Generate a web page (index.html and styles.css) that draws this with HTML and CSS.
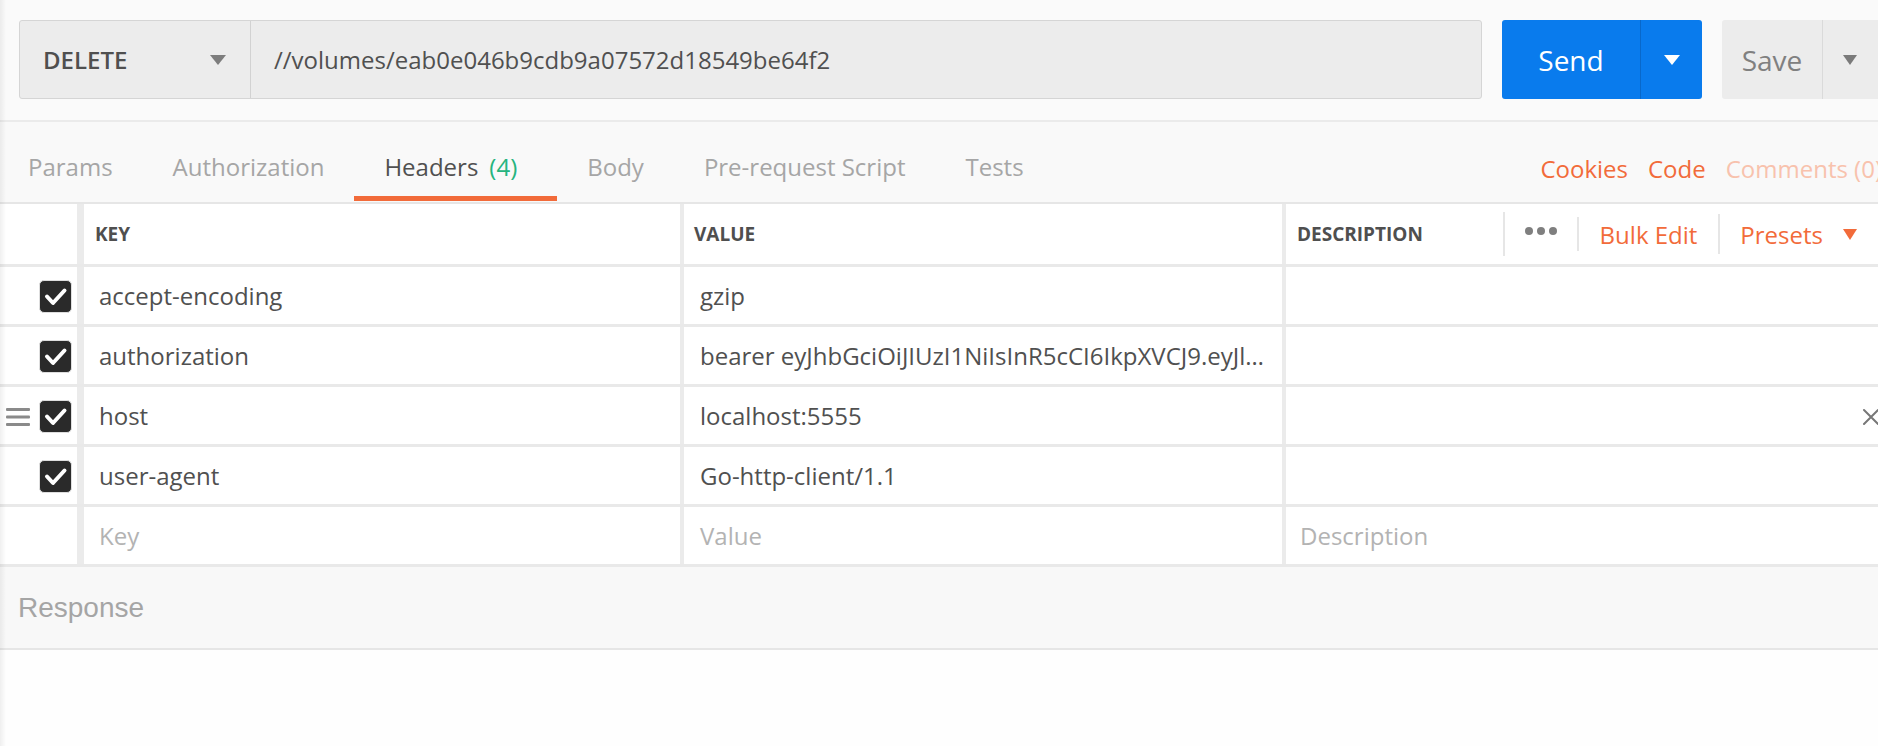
FILE: index.html
```html
<!DOCTYPE html>
<html lang="en">
<head>
<meta charset="utf-8">
<title>DELETE //volumes</title>
<link rel="stylesheet" href="styles.css">
</head>
<body>
<div class="app">
  <header class="request-bar">
    <div class="url-group">
      <div class="method">DELETE<span class="caret caret-gray"></span></div>
      <div class="url">//volumes/eab0e046b9cdb9a07572d18549be64f2</div>
    </div>
    <div class="split-btn send">
      <span class="btn-main">Send</span>
      <span class="btn-caret"><span class="caret caret-white"></span></span>
    </div>
    <div class="split-btn save">
      <span class="btn-main">Save</span>
      <span class="btn-caret"><span class="caret caret-dark"></span></span>
    </div>
  </header>

  <nav class="tabbar">
    <ul class="tabs">
      <li class="tab">Params</li>
      <li class="tab">Authorization</li>
      <li class="tab active">Headers<span class="count">(4)</span></li>
      <li class="tab">Body</li>
      <li class="tab">Pre-request Script</li>
      <li class="tab">Tests</li>
    </ul>
    <div class="tab-links">
      <span class="link">Cookies</span>
      <span class="link">Code</span>
      <span class="link faded">Comments (0)</span>
    </div>
  </nav>

  <section class="kv-table">
    <div class="kv-row kv-head">
      <div class="cell cell-check"></div>
      <div class="cell cell-key">KEY</div>
      <div class="cell cell-value">VALUE</div>
      <div class="cell cell-desc">
        <span>DESCRIPTION</span>
        <div class="head-actions">
          <span class="vdiv d1"></span>
          <span class="dots"><i></i><i></i><i></i></span>
          <span class="vdiv d2"></span>
          <span class="action">Bulk Edit</span>
          <span class="vdiv d3"></span>
          <span class="action presets">Presets<span class="caret caret-orange"></span></span>
        </div>
      </div>
    </div>

    <div class="kv-row">
      <div class="cell cell-check">
        <svg class="checkbox" viewBox="0 0 33 33" width="33" height="33"><rect x="0.5" y="0.5" width="32" height="32" rx="4.5" fill="#2a2a2a" stroke="#dedede"/><polyline points="8,16.5 14,23 25.5,10.5" fill="none" stroke="#fff" stroke-width="4" stroke-linecap="round" stroke-linejoin="round"/></svg>
      </div>
      <div class="cell cell-key">accept-encoding</div>
      <div class="cell cell-value">gzip</div>
      <div class="cell cell-desc"></div>
    </div>

    <div class="kv-row">
      <div class="cell cell-check">
        <svg class="checkbox" viewBox="0 0 33 33" width="33" height="33"><rect x="0.5" y="0.5" width="32" height="32" rx="4.5" fill="#2a2a2a" stroke="#dedede"/><polyline points="8,16.5 14,23 25.5,10.5" fill="none" stroke="#fff" stroke-width="4" stroke-linecap="round" stroke-linejoin="round"/></svg>
      </div>
      <div class="cell cell-key">authorization</div>
      <div class="cell cell-value"><span class="clip">bearer eyJhbGciOiJIUzI1NiIsInR5cCI6IkpXVCJ9.eyJleHAiOjE1MzI3NjYxNjIsImlhdCI6MTUzMjc2MjU2Mn0</span></div>
      <div class="cell cell-desc"></div>
    </div>

    <div class="kv-row">
      <div class="cell cell-check">
        <svg class="grip" viewBox="0 0 24 18" width="24" height="18"><rect x="0" y="0" width="24" height="3" rx="1" fill="#8a8a8a"/><rect x="0" y="7.5" width="24" height="3" rx="1" fill="#8a8a8a"/><rect x="0" y="15" width="24" height="3" rx="1" fill="#8a8a8a"/></svg>
        <svg class="checkbox" viewBox="0 0 33 33" width="33" height="33"><rect x="0.5" y="0.5" width="32" height="32" rx="4.5" fill="#2a2a2a" stroke="#dedede"/><polyline points="8,16.5 14,23 25.5,10.5" fill="none" stroke="#fff" stroke-width="4" stroke-linecap="round" stroke-linejoin="round"/></svg>
      </div>
      <div class="cell cell-key">host</div>
      <div class="cell cell-value">localhost:5555</div>
      <div class="cell cell-desc">
        <svg class="remove" viewBox="0 0 18 18" width="18" height="18"><path d="M2 2 L16 16 M16 2 L2 16" stroke="#777" stroke-width="2" stroke-linecap="round"/></svg>
      </div>
    </div>

    <div class="kv-row">
      <div class="cell cell-check">
        <svg class="checkbox" viewBox="0 0 33 33" width="33" height="33"><rect x="0.5" y="0.5" width="32" height="32" rx="4.5" fill="#2a2a2a" stroke="#dedede"/><polyline points="8,16.5 14,23 25.5,10.5" fill="none" stroke="#fff" stroke-width="4" stroke-linecap="round" stroke-linejoin="round"/></svg>
      </div>
      <div class="cell cell-key">user-agent</div>
      <div class="cell cell-value">Go-http-client/1.1</div>
      <div class="cell cell-desc"></div>
    </div>

    <div class="kv-row kv-new">
      <div class="cell cell-check"></div>
      <div class="cell cell-key">Key</div>
      <div class="cell cell-value">Value</div>
      <div class="cell cell-desc">Description</div>
    </div>
  </section>

  <section class="response">
    <span class="response-title">Response</span>
  </section>
</div>
</body>
</html>
```

FILE: styles.css
```css
* { box-sizing: border-box; }

html, body {
  margin: 0;
  padding: 0;
}

body {
  width: 1878px;
  height: 746px;
  overflow: hidden;
  background: #fefefe;
  font-family: "Open Sans", "Noto Sans", sans-serif;
  color: #505050;
}

.app {
  position: relative;
  width: 100%;
  height: 100%;
}

/* soft edge along the left side of the pane */
.app::before {
  content: "";
  position: absolute;
  left: 0;
  top: 0;
  bottom: 0;
  width: 6px;
  background: linear-gradient(to right, rgba(0, 0, 0, 0.06), rgba(0, 0, 0, 0));
  pointer-events: none;
  z-index: 5;
}

/* ---------- request bar ---------- */
.request-bar {
  display: flex;
  align-items: flex-start;
  gap: 20px;
  height: 122px;
  padding: 20px 0 0 19px;
  background: #fafafa;
  border-bottom: 2px solid #ebebeb;
}

.url-group {
  flex: none;
  width: 1463px;
  height: 79px;
  display: flex;
  background: #ececec;
  border: 1px solid #d5d5d5;
  border-radius: 3px;
}

.method {
  flex: none;
  width: 231px;
  display: flex;
  align-items: center;
  justify-content: space-between;
  padding: 0 24px 0 23px;
  border-right: 1px solid #d2d2d2;
  font-size: 24px;
  font-weight: 600;
  color: #4f4f4f;
}

.url {
  flex: 1;
  display: flex;
  align-items: center;
  padding-left: 23px;
  font-size: 24px;
  color: #505050;
  white-space: nowrap;
}

.caret {
  display: inline-block;
  width: 0;
  height: 0;
  border-left: 8px solid transparent;
  border-right: 8px solid transparent;
  border-top: 10px solid #7d7d7d;
}
.caret-white { border-top-color: #fff; }
.caret-dark { border-top-color: #7a7a7a; border-left-width: 7px; border-right-width: 7px; }
.caret-orange { border-top-color: #f26b3a; border-left-width: 7px; border-right-width: 7px; border-top-width: 11px; }

.split-btn {
  flex: none;
  height: 79px;
  display: flex;
  border-radius: 3px;
  font-size: 28px;
}

.split-btn .btn-main,
.split-btn .btn-caret {
  display: flex;
  align-items: center;
  justify-content: center;
}

.send {
  width: 200px;
  background: #097bed;
  color: #fff;
}
.send .btn-main { width: 139px; border-right: 1px solid #0868ca; }
.send .btn-caret { flex: 1; }

.save {
  width: 161px;
  background: #ececec;
  color: #808080;
}
.save .btn-main { width: 101px; border-right: 1px solid #dadada; }
.save .btn-caret { flex: 1; justify-content: flex-start; padding-left: 20px; }

/* ---------- tab bar ---------- */
.tabbar {
  display: flex;
  height: 82px;
  background: #f9f9f9;
  border-bottom: 2px solid #e6e6e6;
}

.tabs {
  display: flex;
  margin: 0;
  padding: 0;
  list-style: none;
}

.tab {
  padding: 29px 30px 13px;
  line-height: 32px;
  font-size: 24px;
  color: #a6a6a6;
  border-bottom: 5px solid transparent;
  margin-bottom: 1px;
  white-space: nowrap;
}
.tab:first-child { padding-left: 28px; }

.tab.active {
  color: #505050;
  border-bottom-color: #f26b3a;
  padding-right: 40px;
}

.count {
  margin-left: 11px;
  color: #26b47f;
}

.tab-links {
  margin-left: auto;
  margin-right: -4px;
  display: flex;
  gap: 20px;
  padding-top: 31px;
  line-height: 32px;
  font-size: 24px;
  white-space: nowrap;
  color: #f26b3a;
}
.tab-links .faded { color: #f8c2ad; }

/* ---------- key / value table ---------- */
.kv-table {
  background: #fff;
}

.kv-row {
  display: grid;
  grid-template-columns: 84px 600px 602px 1fr;
  height: 60px;
  border-bottom: 3px solid #e9e9e9;
  font-size: 24px;
}

.kv-head {
  height: 63px;
  font-size: 19px;
  font-weight: 700;
  color: #4f4f4f;
}

.cell {
  display: flex;
  align-items: center;
  min-width: 0;
  white-space: nowrap;
}

.cell-check {
  border-right: 7px solid #ebebeb;
  padding: 0 5px 0 6px;
}
.cell-check .checkbox { margin-left: auto; margin-top: 2px; }
.cell-check .grip { margin-top: 2px; }

.cell-key {
  border-right: 4px solid #ebebeb;
  padding-left: 15px;
}

.cell-value {
  border-right: 4px solid #ebebeb;
  padding: 0 12px 0 16px;
}

.cell-desc {
  padding-left: 14px;
}

.kv-head .cell-key { padding-left: 11px; }
.kv-head .cell-value { padding-left: 10px; }
.kv-head .cell-desc { padding-left: 11px; }

.clip {
  display: block;
  overflow: hidden;
  text-overflow: ellipsis;
  min-width: 0;
}

.remove {
  margin-left: auto;
  margin-right: -2px;
  margin-top: 2px;
}

.kv-new { color: #b3b3b3; }

/* header actions */
.head-actions {
  margin-left: auto;
  display: flex;
  align-items: center;
  height: 100%;
  font-size: 24px;
  font-weight: 400;
  color: #f26b3a;
}

.vdiv {
  display: block;
  width: 2px;
  background: #e6e6e6;
}
.vdiv.d1 { height: 44px; }
.vdiv.d2 { height: 34px; }
.vdiv.d3 { height: 40px; }

.dots {
  display: flex;
  gap: 4px;
  padding: 0 20px;
  margin-top: -6px;
}
.dots i {
  display: block;
  width: 8px;
  height: 8px;
  border-radius: 50%;
  background: #7f7f7f;
}

.action {
  padding: 0 21px;
}

.presets {
  display: flex;
  align-items: center;
  gap: 20px;
  padding-left: 20px;
}

/* ---------- response panel ---------- */
.response {
  height: 83px;
  display: flex;
  align-items: center;
  padding-left: 18px;
  background: #f8f8f8;
  border-bottom: 2px solid #e6e6e6;
}

.response-title {
  font-family: "Liberation Sans", Arial, sans-serif;
  font-size: 28px;
  color: #a5a5a5;
}
```
